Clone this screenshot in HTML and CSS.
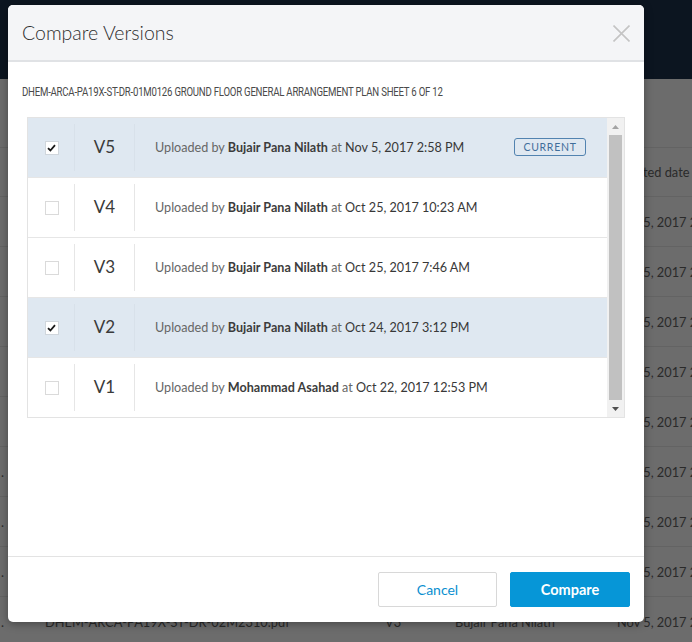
FILE: index.html
```html
<!DOCTYPE html>
<html>
<head>
<meta charset="utf-8">
<title>Compare Versions</title>
<link rel="stylesheet" href="styles.css">
</head>
<body>
<div class="page">
  <div class="topbar"></div>
  <div class="toolbar"></div>
  <div class="bg-table">
    <div class="bg-row bg-head"><span class="c0"></span><span class="c1">Name</span><span class="c2">Version</span><span class="c3">Uploaded by</span><span class="c4">Created date</span></div>
    <div class="bg-row"><span class="c0"></span><span class="c1">DHEM-ARCA-PA19X-ST-DR-01M0126.pdf</span><span class="c2">V5</span><span class="c3">Bujair Pana Nilath</span><span class="c4">Nov 5, 2017 2:58 PM</span></div>
    <div class="bg-row"><span class="c0"></span><span class="c1">DHEM-ARCA-PA19X-ST-DR-01M0127.pdf</span><span class="c2">V3</span><span class="c3">Bujair Pana Nilath</span><span class="c4">Nov 5, 2017 2:58 PM</span></div>
    <div class="bg-row"><span class="c0"></span><span class="c1">DHEM-ARCA-PA19X-ST-DR-01M0128.pdf</span><span class="c2">V3</span><span class="c3">Bujair Pana Nilath</span><span class="c4">Nov 5, 2017 2:58 PM</span></div>
    <div class="bg-row"><span class="c0"></span><span class="c1">DHEM-ARCA-PA19X-ST-DR-01M0129.pdf</span><span class="c2">V3</span><span class="c3">Bujair Pana Nilath</span><span class="c4">Nov 5, 2017 2:58 PM</span></div>
    <div class="bg-row"><span class="c0"></span><span class="c1">DHEM-ARCA-PA19X-ST-DR-02M2306.pdf</span><span class="c2">V3</span><span class="c3">Bujair Pana Nilath</span><span class="c4">Nov 5, 2017 2:58 PM</span></div>
    <div class="bg-row"><span class="c0">.</span><span class="c1">DHEM-ARCA-PA19X-ST-DR-02M2307.pdf</span><span class="c2">V3</span><span class="c3">Bujair Pana Nilath</span><span class="c4">Nov 5, 2017 2:58 PM</span></div>
    <div class="bg-row"><span class="c0">.</span><span class="c1">DHEM-ARCA-PA19X-ST-DR-02M2308.pdf</span><span class="c2">V3</span><span class="c3">Bujair Pana Nilath</span><span class="c4">Nov 5, 2017 2:58 PM</span></div>
    <div class="bg-row"><span class="c0">.</span><span class="c1">DHEM-ARCA-PA19X-ST-DR-02M2309.pdf</span><span class="c2">V3</span><span class="c3">Bujair Pana Nilath</span><span class="c4">Nov 5, 2017 2:58 PM</span></div>
    <div class="bg-row"><span class="c0">.</span><span class="c1">DHEM-ARCA-PA19X-ST-DR-02M2310.pdf</span><span class="c2">V3</span><span class="c3">Bujair Pana Nilath</span><span class="c4">Nov 5, 2017 2:58 PM</span></div>
  </div>
</div>

<div class="modal">
  <div class="modal-header">
    <h1 class="modal-title">Compare Versions</h1>
    <button class="close" aria-label="Close">
      <svg width="17" height="17" viewBox="0 0 17 17"><path d="M0.5 0.5 L16.5 16.5 M16.5 0.5 L0.5 16.5" stroke="#c4c4c4" stroke-width="1.6" fill="none"/></svg>
    </button>
  </div>
  <div class="modal-body">
    <div class="filename"><span class="filename-text">DHEM-ARCA-PA19X-ST-DR-01M0126 GROUND FLOOR GENERAL ARRANGEMENT PLAN SHEET 6 OF 12</span></div>
    <div class="list">
      <div class="rows">
        <div class="row selected">
          <div class="cell-check"><span class="checkbox checked"><svg width="9" height="8" viewBox="0 0 9 8"><path d="M1 4.2 L3.4 6.5 L8 1.2" stroke="#1a1a1a" stroke-width="1.8" fill="none"/></svg></span></div>
          <div class="cell-ver">V5</div>
          <div class="cell-desc">Uploaded by <b>Bujair Pana Nilath</b> at <span class="date">Nov 5, 2017 2:58 PM</span></div>
          <span class="badge">CURRENT</span>
        </div>
        <div class="row">
          <div class="cell-check"><span class="checkbox"></span></div>
          <div class="cell-ver">V4</div>
          <div class="cell-desc">Uploaded by <b>Bujair Pana Nilath</b> at <span class="date">Oct 25, 2017 10:23 AM</span></div>
        </div>
        <div class="row">
          <div class="cell-check"><span class="checkbox"></span></div>
          <div class="cell-ver">V3</div>
          <div class="cell-desc">Uploaded by <b>Bujair Pana Nilath</b> at <span class="date">Oct 25, 2017 7:46 AM</span></div>
        </div>
        <div class="row selected">
          <div class="cell-check"><span class="checkbox checked"><svg width="9" height="8" viewBox="0 0 9 8"><path d="M1 4.2 L3.4 6.5 L8 1.2" stroke="#1a1a1a" stroke-width="1.8" fill="none"/></svg></span></div>
          <div class="cell-ver">V2</div>
          <div class="cell-desc">Uploaded by <b>Bujair Pana Nilath</b> at <span class="date">Oct 24, 2017 3:12 PM</span></div>
        </div>
        <div class="row">
          <div class="cell-check"><span class="checkbox"></span></div>
          <div class="cell-ver">V1</div>
          <div class="cell-desc">Uploaded by <b>Mohammad Asahad</b> at <span class="date">Oct 22, 2017 12:53 PM</span></div>
        </div>
      </div>
      <div class="scrollbar">
        <div class="arrow"><svg width="7" height="4" viewBox="0 0 7 4"><path d="M0 4 L3.5 0 L7 4 Z" fill="#a3a3a3"/></svg></div>
        <div class="thumb"></div>
        <div class="arrow"><svg width="7" height="4" viewBox="0 0 7 4"><path d="M0 0 L3.5 4 L7 0 Z" fill="#505050"/></svg></div>
      </div>
    </div>
  </div>
  <div class="modal-footer">
    <button class="btn btn-secondary">Cancel</button>
    <button class="btn btn-primary">Compare</button>
  </div>
</div>
</body>
</html>
```
FILE: styles.css
```css
* { box-sizing: border-box; }
html, body { margin: 0; padding: 0; }
body {
  width: 692px;
  height: 642px;
  overflow: hidden;
  background: #6c6c6c;
  font-family: "Lato", "Liberation Sans", sans-serif;
  color: #333;
  position: relative;
}

/* background page (dimmed) */
.page { width: 692px; }
.topbar { height: 79px; background: #0c1520; }
.toolbar { height: 69px; border-bottom: 1px solid #636363; }
.bg-row {
  display: grid;
  grid-template-columns: 45px 340px 70px 160px 1fr;
  height: 50px;
  align-items: center;
  border-bottom: 1px solid #636363;
  font-size: 12.8px;
  color: #2a2a2a;
  white-space: nowrap;
  overflow: hidden;
}
.bg-row .c0 { padding-left: 1px; }
.bg-row .c4 { padding-left: 2px; }
.bg-head { height: 49px; }

/* modal */
.modal {
  position: absolute;
  left: 8px;
  top: 5px;
  width: 636px;
  height: 617px;
  background: #fff;
  border-radius: 5px;
  box-shadow: 0 2px 8px rgba(0, 0, 0, 0.35);
  display: flex;
  flex-direction: column;
  overflow: hidden;
}
.modal-header {
  height: 57px;
  flex: none;
  background: #f4f5f7;
  border-bottom: 2px solid #e0e2e5;
  display: flex;
  align-items: center;
  justify-content: space-between;
  padding: 0 14px 0 14px;
}
.modal-title {
  margin: 0;
  font-size: 19.5px;
  font-weight: 300;
  color: #2e2e2e;
}
.close {
  border: 0;
  background: none;
  padding: 0;
  width: 17px;
  height: 17px;
  display: block;
  position: relative;
  top: 1px;
}
.close svg { display: block; }

.modal-body {
  flex: 1;
  padding: 20px 19px 0 14px;
}
.filename {
  height: 16px;
  line-height: 16px;
  white-space: nowrap;
}
.filename-text {
  display: inline-block;
  font-family: "Roboto", "Liberation Sans", sans-serif;
  font-size: 12.5px;
  letter-spacing: -0.3px;
  color: #4a4a4a;
  transform: scaleX(0.77);
  transform-origin: left center;
}
.list {
  margin: 19px 0 0 5px;
  width: 598px;
  height: 301px;
  border: 1px solid #e3e3e3;
  display: flex;
}
.rows { flex: 1; display: flex; flex-direction: column; }
.row {
  height: 60px;
  display: flex;
  align-items: center;
  border-bottom: 1px solid #e6e6e6;
}
.row:last-child { border-bottom: 0; height: 59px; }
.row.selected { background: #dfe8f1; }
.cell-check {
  width: 47px;
  align-self: stretch;
  margin: 6px 0;
  border-right: 1px solid #e6e6e6;
  display: flex;
  align-items: center;
  justify-content: center;
  padding-left: 1px;
}
.row.selected .cell-check, .row.selected .cell-ver { border-right-color: #d8e1ea; }
.checkbox {
  width: 14px;
  height: 14px;
  border: 1px solid #dadada;
  background: #fff;
  display: flex;
  align-items: center;
  justify-content: center;
}
.checkbox.checked { border-color: #d0d6dc; }
.checkbox svg { display: block; }
.cell-ver {
  width: 60px;
  align-self: stretch;
  margin: 6px 0;
  border-right: 1px solid #e6e6e6;
  display: flex;
  align-items: center;
  justify-content: center;
  font-size: 17px;
  color: #3a3a3a;
  padding-bottom: 3px;
}
.cell-desc {
  padding-left: 20px;
  font-size: 12.6px;
  color: #666;
  white-space: nowrap;
}
.cell-desc b { font-weight: 700; color: #3c3c3c; }
.cell-desc .date { color: #383838; }
.badge {
  margin-left: auto;
  margin-right: 21px;
  width: 72px;
  height: 18px;
  border: 1px solid #5283b0;
  border-radius: 3px;
  color: #3f6e9b;
  font-size: 10.5px;
  letter-spacing: 0.7px;
  display: flex;
  align-items: center;
  justify-content: center;
  margin-top: -2px;
}
.scrollbar {
  width: 17px;
  flex: none;
  background: #f1f1f1;
  display: flex;
  flex-direction: column;
}
.arrow {
  height: 17px;
  display: flex;
  align-items: center;
  justify-content: center;
}
.arrow svg { display: block; }
.thumb {
  flex: 1;
  margin: 0 2px 0 2px;
  background: #c1c1c1;
}

.modal-footer {
  flex: none;
  height: 66px;
  border-top: 1px solid #e3e3e3;
  display: flex;
  justify-content: flex-end;
  align-items: flex-start;
  padding: 15px 14px 0 0;
  gap: 13px;
}
.btn {
  height: 35px;
  width: 119px;
  border-radius: 2px;
  font-family: "Lato", "Liberation Sans", sans-serif;
  font-size: 14px;
  cursor: pointer;
}
.btn-secondary {
  background: #fff;
  border: 1px solid #d8d8d8;
  color: #0a8fd0;
}
.btn-primary {
  width: 120px;
  background: #0696d7;
  border: 1px solid #0696d7;
  color: #fff;
  font-weight: 700;
  font-size: 14.5px;
}
```
